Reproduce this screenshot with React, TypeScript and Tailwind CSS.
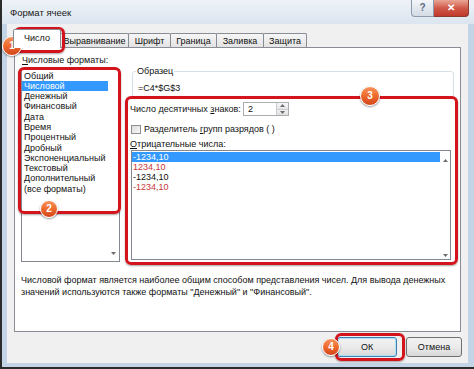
import React from "react";

const formats = [
  "Общий",
  "Числовой",
  "Денежный",
  "Финансовый",
  "Дата",
  "Время",
  "Процентный",
  "Дробный",
  "Экспоненциальный",
  "Текстовый",
  "Дополнительный",
  "(все форматы)",
];

const negatives: { t: string; c: string; sel?: boolean }[] = [
  { t: "-1234,10", c: "text-white", sel: true },
  { t: "1234,10", c: "text-[#c8383a]" },
  { t: "-1234,10", c: "text-[#111]" },
  { t: "-1234,10", c: "text-[#c8383a]" },
];

function Badge({ n, cls }: { n: string; cls: string }) {
  return (
    <div
      className={`absolute ${cls} rounded-full border-[1.5px] border-white bg-linear-to-b from-[#f7925a] via-[#ee6a2c] to-[#d2441a] shadow-[0_1px_2px_rgba(0,0,0,0.45)] flex items-center justify-center text-white text-[10px] font-bold leading-none`}
    >
      {n}
    </div>
  );
}

function RedBox({ cls }: { cls: string }) {
  return (
    <div
      className={`absolute ${cls} border-[3px] border-[#d4141d] rounded-[6px] shadow-[0_1px_2px_rgba(0,0,0,0.35)]`}
    />
  );
}

function ArrowDown() {
  return (
    <svg width="5" height="3" viewBox="0 0 5 3">
      <path d="M0 0 L5 0 L2.5 3 Z" fill="#6d6d6d" />
    </svg>
  );
}
function ArrowUp() {
  return (
    <svg width="5" height="3" viewBox="0 0 5 3">
      <path d="M0 3 L5 3 L2.5 0 Z" fill="#6d6d6d" />
    </svg>
  );
}

export default function App() {
  const tabs = [
    { t: "Выравнивание", w: "w-[69px]" },
    { t: "Шрифт", w: "w-[43px]" },
    { t: "Граница", w: "w-[47px]" },
    { t: "Заливка", w: "w-[48px]" },
    { t: "Защита", w: "w-[44px]" },
  ];
  return (
    <div className="relative w-[474px] h-[369px] overflow-hidden bg-[#c3d4e7] border-l-2 border-b-2 border-[#2b2b2b] flex flex-col font-['Liberation_Sans','Noto_Sans',sans-serif] text-[9px] text-[#111]">
      {/* Title bar */}
      <div className="h-[24px] shrink-0 flex items-start justify-between pl-[8px] pr-[5px] bg-linear-to-b from-[#eef2f7] to-[#dbe5f0]">
        <div className="pt-[8px] leading-[10px] text-[9.5px] text-[#1a1a1a]">Формат ячеек</div>
        <div className="flex">
          <div className="w-[23px] h-[17px] border border-t-0 border-[#8c9aab] rounded-bl-[4px] bg-linear-to-b from-[#f3f6f9] to-[#d3dbe5] flex items-center justify-center text-[10px] font-bold text-[#5d6b7c] leading-none">
            ?
          </div>
          <div className="w-[35px] h-[17px] border border-t-0 border-l-0 border-[#8a3a2e] rounded-br-[4px] bg-linear-to-b from-[#e8a595] via-[#d0594a] to-[#c0392b] flex items-center justify-center text-[10px] font-bold text-white leading-none">
            ✕
          </div>
        </div>
      </div>

      {/* Client area */}
      <div className="ml-[5px] mr-[6px] mb-[4px] flex-1 bg-[#f0f0f0] flex flex-col pt-[5px] pl-[6px] pr-[6px] pb-[6px]">
        {/* Tabs */}
        <div className="flex items-end h-[18px]">
          <div className="relative z-10 w-[48px] h-[19px] -mb-px bg-white border border-b-0 border-[#898c95] rounded-t-[2px] flex items-center justify-center leading-[10px] pb-[2px]">
            Число
          </div>
          {tabs.map((tb) => (
            <div
              key={tb.t}
              className={`${tb.w} -ml-px h-[14px] border border-b-0 border-[#898c95] rounded-t-[2px] bg-linear-to-b from-[#f6f6f6] to-[#e3e3e3] flex items-center justify-center leading-[10px]`}
            >
              {tb.t}
            </div>
          ))}
        </div>

        {/* Tab page */}
        <div className="mx-px h-[285px] shrink-0 bg-white border border-[#898c95] flex flex-col">
          <div className="flex items-start">
            {/* Left column */}
            <div className="ml-[6px] mt-[7px] w-[99px] flex flex-col">
              <div className="leading-[10px] pl-px">
                <span className="underline">Ч</span>исловые форматы:
              </div>
              <div className="mt-[4px] h-[193px] border border-[#828790] flex">
                <div className="flex-1 flex flex-col pt-[0.5px]">
                  {formats.map((f, i) => (
                    <div
                      key={f}
                      className={`h-[10.3px] leading-[10.3px] pl-[2px] whitespace-nowrap ${
                        i === 1 ? "bg-[#3399ff] text-white" : ""
                      }`}
                    >
                      {f}
                    </div>
                  ))}
                </div>
                <div className="w-[11px] flex flex-col justify-end items-center pb-[6px]">
                  <ArrowDown />
                </div>
              </div>
            </div>

            {/* Right column */}
            <div className="ml-[10px] mt-[18px] w-[324px] flex flex-col">
              <fieldset className="ml-[2px] w-[322px] border border-[#d5dfe5] rounded-[3px] pl-[5px] pt-[7px] pb-[4px] m-0 min-w-0">
                <legend className="-ml-[2px] px-px leading-[10px]">Образец</legend>
                <div className="leading-[10px]">=C4*$G$3</div>
              </fieldset>

              <div className="mt-[4px] h-[14px] flex items-center">
                <div className="w-[113px] leading-[10px] whitespace-nowrap">
                  Число десятичных <span className="underline">з</span>наков:
                </div>
                <div className="w-[46px] h-[14px] border border-[#abadb3] flex bg-white">
                  <div className="flex-1 pl-[4px] leading-[12px]">2</div>
                  <div className="w-[12px] flex flex-col border-l border-[#c9ccd2]">
                    <div className="flex-1 flex items-center justify-center bg-linear-to-b from-[#f7f7f7] to-[#e6e6e6] border-b border-[#c9ccd2]">
                      <ArrowUp />
                    </div>
                    <div className="flex-1 flex items-center justify-center bg-linear-to-b from-[#f0f0f0] to-[#e0e0e0]">
                      <ArrowDown />
                    </div>
                  </div>
                </div>
              </div>

              <div className="mt-[8px] h-[10px] flex items-center">
                <div className="ml-px w-[10px] h-[9px] border border-[#8e8f8f] bg-linear-to-br from-[#dcdcdc] to-[#f8f8f8]" />
                <div className="ml-[3px] leading-[10px] whitespace-nowrap">
                  Разделитель <span className="underline">г</span>рупп разрядов ( )
                </div>
              </div>

              <div className="mt-[5px] leading-[10px]">
                <span className="underline">О</span>трицательные числа:
              </div>

              <div className="mt-px ml-px w-[320px] h-[110px] border border-[#828790] flex">
                <div className="flex-1 flex flex-col pt-px">
                  {negatives.map((n, i) => (
                    <div
                      key={i}
                      className={`h-[10px] leading-[10px] pl-px ${n.c} ${
                        n.sel ? "bg-[#3399ff]" : ""
                      }`}
                    >
                      {n.t}
                    </div>
                  ))}
                </div>
                <div className="w-[10px] flex flex-col justify-between items-center pt-[8px] pb-[2px]">
                  <ArrowUp />
                  <ArrowDown />
                </div>
              </div>
            </div>
          </div>

          <div className="mt-[12px] pl-[6px] leading-[12px] whitespace-nowrap">
            Числовой формат является наиболее общим способом представления чисел. Для вывода денежных
            <br />
            значений используются также форматы "Денежный" и "Финансовый".
          </div>
        </div>

        {/* Buttons */}
        <div className="mt-[5px] flex justify-end gap-[9px] h-[20px]">
          <div className="w-[60px] h-[20px] rounded-[3px] border border-[#3c7fb1] bg-linear-to-b from-[#f2f2f2] via-[#ebebeb] to-[#d8d8d8] shadow-[inset_0_0_0_1px_#aee0f7] flex items-center justify-center leading-[10px]">
            ОК
          </div>
          <div className="w-[56px] h-[20px] rounded-[3px] border border-[#707070] bg-linear-to-b from-[#f2f2f2] via-[#ebebeb] to-[#d8d8d8] flex items-center justify-center leading-[10px]">
            Отмена
          </div>
        </div>
      </div>

      {/* Annotation overlays */}
      <RedBox cls="left-[12px] top-[27px] w-[51px] h-[26px]" />
      <RedBox cls="left-[16px] top-[67px] w-[103px] h-[147px]" />
      <RedBox cls="left-[123px] top-[96px] w-[333px] h-[169px]" />
      <RedBox cls="left-[333px] top-[333px] w-[70px] h-[28px]" />
      <Badge n="1" cls="left-[0px] top-[36px] w-[20px] h-[20px]" />
      <Badge n="2" cls="left-[38px] top-[200px] w-[18px] h-[18px]" />
      <Badge n="3" cls="left-[358px] top-[86px] w-[20px] h-[20px]" />
      <Badge n="4" cls="left-[320px] top-[338px] w-[18px] h-[18px]" />
    </div>
  );
}
